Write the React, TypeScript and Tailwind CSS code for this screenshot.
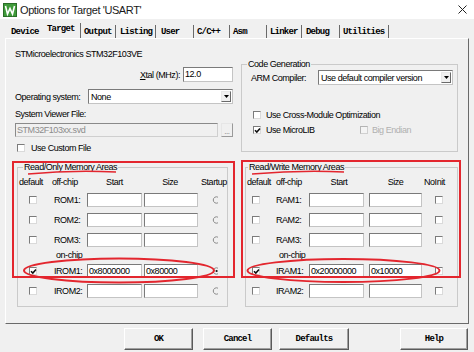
import React from 'react';

const UI = "font-['Liberation_Sans',Arial,sans-serif] tracking-[-0.45px]";
const MONO = "font-['Liberation_Mono',monospace] font-bold text-[9px] tracking-[-0.8px]";

const tabs = [
  { label: 'Device', w: 39, pl: 6 },
  { label: 'Target', w: 37, pl: 3, active: true },
  { label: 'Output', w: 35, pl: 3 },
  { label: 'Listing', w: 40, pl: 4 },
  { label: 'User', w: 38, pl: 5 },
  { label: 'C/C++', w: 36, pl: 3 },
  { label: 'Asm', w: 37, pl: 3 },
  { label: 'Linker', w: 35, pl: 3 },
  { label: 'Debug', w: 38, pl: 4 },
  { label: 'Utilities', w: 49, pl: 3 },
];

const Check = ({ checked, disabled }: { checked?: boolean; disabled?: boolean }) => (
  <span
    className={`relative block w-[8px] h-[8px] shrink-0 border ${
      disabled
        ? 'bg-[#f4f4f4] border-[#d0d0d0] border-t-[#b4b4b4] border-l-[#b4b4b4]'
        : 'bg-white border-[#dadada] border-t-[#7b7b7b] border-l-[#7b7b7b]'
    }`}
  >
    {checked && (
      <svg className="absolute left-[0px] top-[0px]" width="7" height="7" viewBox="0 0 7 7">
        <path d="M1 3.2 L2.8 5 L6 1.5" fill="none" stroke="#111" strokeWidth="1.6" />
      </svg>
    )}
  </span>
);

const Radio = ({ on }: { on?: boolean }) => (
  <svg width="8" height="8" viewBox="0 0 8 8" className="block shrink-0">
    <path d="M6 1.2 A3.2 3.2 0 1 0 6 6.8" fill="none" stroke="#8a8a8a" strokeWidth="1" />
    {on && <circle cx="4.6" cy="4" r="1.1" fill="#111" />}
  </svg>
);

const Field = ({ w, value, h = 14 }: { w: number; value?: string; h?: number }) => (
  <div
    className="bg-white border border-[#c4c4c4] border-t-[#7a7a7a] border-l-[#7a7a7a] pl-[1px] leading-[12px] text-black shrink-0 overflow-hidden"
    style={{ width: w, height: h }}
  >
    {value}
  </div>
);

const Combo = ({ w, value }: { w: number; value: string }) => (
  <div className="flex items-center bg-white border border-[#c4c4c4] border-t-[#7a7a7a] border-l-[#7a7a7a] h-[15px] shrink-0" style={{ width: w }}>
    <span className="flex-1 pl-[2px] leading-[12px]">{value}</span>
    <span className="flex items-center justify-center w-[10px] h-[11px] mr-[1px] bg-[#f0f0f0] border border-[#e8e8e8] border-r-[#6a6a6a] border-b-[#6a6a6a]">
      <svg width="5" height="3" viewBox="0 0 5 3">
        <path d="M0 0 H5 L2.5 3 Z" fill="#000" />
      </svg>
    </span>
  </div>
);

type Row = { label: string; start?: string; size?: string; on?: boolean };

const romRows: Row[] = [{ label: 'ROM1:' }, { label: 'ROM2:' }, { label: 'ROM3:' }];
const iromRows: Row[] = [{ label: 'IROM1:', start: '0x8000000', size: '0x80000', on: true }, { label: 'IROM2:' }];
const ramRows: Row[] = [{ label: 'RAM1:' }, { label: 'RAM2:' }, { label: 'RAM3:' }];
const iramRows: Row[] = [{ label: 'IRAM1:', start: '0x20000000', size: '0x10000', on: true }, { label: 'IRAM2:' }];

const RomRow = ({ r }: { r: Row }) => (
  <div className="flex items-center h-[20px]">
    <div className="w-[34px] pl-[11px]">
      <Check checked={r.on} />
    </div>
    <div className="w-[35px] pl-[2px]">{r.label}</div>
    <Field w={55} value={r.start} />
    <div className="ml-[2px]">
      <Field w={54} value={r.size} />
    </div>
    <div className="pl-[14px]">
      <Radio on={r.on} />
    </div>
  </div>
);

const RamRow = ({ r }: { r: Row }) => (
  <div className="flex items-center h-[20px]">
    <div className="w-[30px] pl-[6px]">
      <Check checked={r.on} />
    </div>
    <div className="w-[33px]">{r.label}</div>
    <Field w={55} value={r.start} />
    <div className="ml-[5px]">
      <Field w={53} value={r.size} />
    </div>
    <div className="pl-[13px]">
      <Check />
    </div>
  </div>
);

const Button = ({ label, w, className = '' }: { label: string; w: number; className?: string }) => (
  <div
    className={`h-[22px] flex items-center justify-center bg-[#f0f0f0] border border-[#ffffff] border-r-[#5a5a5a] border-b-[#5a5a5a] shadow-[inset_-1px_-1px_0_#a0a0a0] ${MONO} ${className}`}
    style={{ width: w }}
  >
    {label}
  </div>
);

export default function App() {
  return (
    <div className={`relative w-[474px] h-[352px] overflow-hidden whitespace-nowrap bg-[#f0f0f0] text-[9px] leading-[12px] text-black ${UI}`}>
      {/* title bar */}
      <div className="h-[19px] bg-white flex items-center pl-[3px]">
        <svg width="14" height="14" viewBox="0 0 14 14" className="shrink-0">
          <rect x="0.5" y="0.5" width="13" height="13" fill="#3f9a3a" stroke="#2a6e27" />
          <path d="M2.5 3 L4.5 11 L7 5.5 L9.5 11 L11.5 3" fill="none" stroke="#fff" strokeWidth="1.6" />
        </svg>
        <span className="ml-[3px] text-[11px] leading-[14px] tracking-[-0.4px] text-[#1a1a1a]">Options for Target 'USART'</span>
        <span className="ml-auto mr-[7px]">
          <svg width="9" height="9" viewBox="0 0 9 9" className="block">
            <path d="M0.5 0.5 L8.5 8.5 M8.5 0.5 L0.5 8.5" stroke="#222" strokeWidth="1" />
          </svg>
        </span>
      </div>

      {/* tabs */}
      <div className="h-[19px] flex items-end pl-[5px]">
        {tabs.map((t) => (
          <div
            key={t.label}
            className={`${MONO} shrink-0 ${
              t.active ? 'h-[15px] leading-[13px] border-r border-[#6a6a6a]' : 'h-[13px] leading-[15px]'
            } ${t.label !== 'Device' && !t.active ? 'border-r border-[#6a6a6a]' : ''}`}
            style={{ width: t.w, paddingLeft: t.pl }}
          >
            {t.label}
          </div>
        ))}
      </div>

      {/* tab panel */}
      <div className="ml-[5px] w-[464px] h-[286px] border-l border-t border-white border-r border-b border-r-[#6a6a6a] border-b-[#6a6a6a] flex pl-[9px]">
        {/* left column */}
        <div className="w-[219px] flex flex-col">
          <div className="mt-[9px] h-[12px]">STMicroelectronics STM32F103VE</div>
          <div className="mt-[7px] flex items-center justify-end pr-[1px]">
            <span className="mr-[3px]">
              <span className="underline">X</span>tal (MHz):
            </span>
            <Field w={50} h={15} value="12.0" />
          </div>
          <div className="mt-[7px] flex items-center pr-[1px]">
            <span className="flex-1">Operating system:</span>
            <Combo w={145} value="None" />
          </div>
          <div className="mt-[4px] h-[12px]">System Viewer File:</div>
          <div className="mt-[3px] flex items-center">
            <div className="w-[203px] h-[14px] bg-[#f0f0f0] border border-[#cfcfcf] border-t-[#8a8a8a] border-l-[#8a8a8a] pl-[1px] leading-[12px] text-[#8c8c8c]">
              STM32F103xx.svd
            </div>
            <div className="ml-[3px] w-[12px] h-[14px] border border-[#e6e6e6] border-r-[#9a9a9a] border-b-[#9a9a9a] flex items-end justify-center text-[#7a7a7a] leading-[8px] text-[8px]">
              ...
            </div>
          </div>
          <div className="mt-[5px] h-[12px] flex items-center pl-[2px]">
            <Check />
            <span className="ml-[6px]">Use Custom File</span>
          </div>
          <fieldset className="mt-[7px] ml-[2px] w-[211px] h-[146px] border border-[#cacaca] pl-0">
            <legend className="ml-[5px] px-[1px] leading-[12px]">Read/Only Memory Areas</legend>
            <div className="mt-[3px] flex h-[12px]">
              <div className="w-[34px] pl-[1px]">default</div>
              <div className="w-[35px]">off-chip</div>
              <div className="w-[55px] text-center">Start</div>
              <div className="w-[56px] text-center">Size</div>
              <div className="pl-[3px]">Startup</div>
            </div>
            <div className="mt-[2px]">
              {romRows.map((r) => (
                <RomRow key={r.label} r={r} />
              ))}
            </div>
            <div className="h-[11px] pl-[38px] leading-[11px]">on-chip</div>
            {iromRows.map((r) => (
              <RomRow key={r.label} r={r} />
            ))}
          </fieldset>
        </div>

        {/* right column */}
        <div className="ml-[7px] w-[225px] flex flex-col">
          <fieldset className="mt-[19px] w-[217px] h-[94px] border border-[#cacaca]">
            <legend className="ml-[5px] px-[1px] leading-[12px]">Code Generation</legend>
            <div className="flex items-center pl-[9px]">
              <span className="w-[67px]">ARM Compiler:</span>
              <Combo w={135} value="Use default compiler version" />
            </div>
            <div className="mt-[24px] h-[12px] flex items-center pl-[11px]">
              <Check />
              <span className="ml-[5px]">Use Cross-Module Optimization</span>
            </div>
            <div className="mt-[3px] h-[12px] flex items-center pl-[11px]">
              <div className="w-[107px] flex items-center">
                <Check checked />
                <span className="ml-[5px]">Use MicroLIB</span>
              </div>
              <Check disabled />
              <span className="ml-[4px] text-[#b0b0b0]">Big Endian</span>
            </div>
          </fieldset>
          <fieldset className="mt-[9px] ml-[4px] w-[213px] h-[146px] border border-[#cacaca]">
            <legend className="ml-[2px] px-[1px] leading-[12px]">Read/Write Memory Areas</legend>
            <div className="mt-[3px] flex h-[12px]">
              <div className="w-[30px] pl-[1px]">default</div>
              <div className="w-[33px]">off-chip</div>
              <div className="w-[60px] text-center">Start</div>
              <div className="w-[53px] text-center">Size</div>
              <div className="pl-[2px]">NoInit</div>
            </div>
            <div className="mt-[2px]">
              {ramRows.map((r) => (
                <RamRow key={r.label} r={r} />
              ))}
            </div>
            <div className="h-[11px] pl-[33px] leading-[11px]">on-chip</div>
            {iramRows.map((r) => (
              <RamRow key={r.label} r={r} />
            ))}
          </fieldset>
        </div>
      </div>

      {/* buttons */}
      <div className="mt-[4px] flex pl-[124px]">
        <Button label="OK" w={69} />
        <Button label="Cancel" w={69} className="ml-[10px]" />
        <Button label="Defaults" w={70} className="ml-[7px]" />
        <Button label="Help" w={68} className="ml-[51px]" />
      </div>

      {/* red annotations drawn over the dialog */}
      <svg className="absolute left-0 top-0 pointer-events-none" width="474" height="352" viewBox="0 0 474 352">
        <rect x="13" y="162" width="221" height="115" fill="none" stroke="#e3262e" strokeWidth="2" />
        <rect x="242" y="161" width="218" height="116" fill="none" stroke="#e3262e" strokeWidth="2" />
        <path d="M28 174 Q70 170 116 172" fill="none" stroke="#e3262e" strokeWidth="1.5" />
        <path d="M252 174 Q300 170 344 172" fill="none" stroke="#e3262e" strokeWidth="1.5" />
        <ellipse cx="119" cy="270.5" rx="95" ry="12" fill="none" stroke="#e3262e" strokeWidth="2" />
        <ellipse cx="343.5" cy="270.5" rx="96" ry="11.5" fill="none" stroke="#e3262e" strokeWidth="2" />
      </svg>
    </div>
  );
}
